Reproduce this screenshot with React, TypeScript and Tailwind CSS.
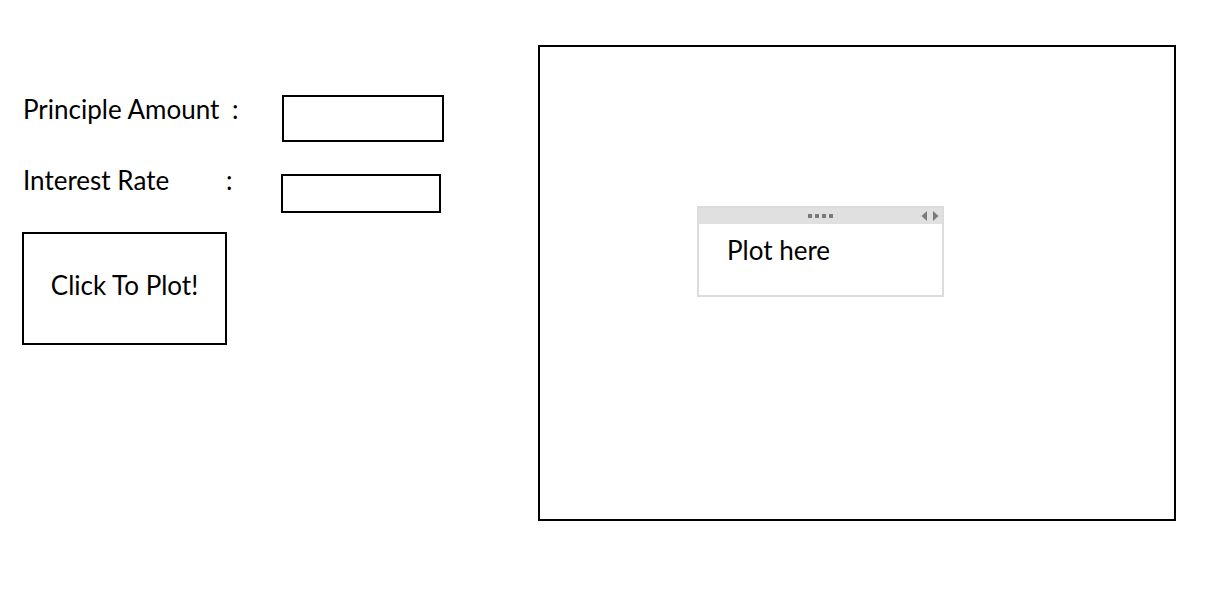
const font = "font-['Lato','Liberation_Sans',sans-serif]";

const PlotWidget = () => {
  return (
    <div className="ml-[157px] mt-[159px] w-[247px] h-[91px] border-2 border-[#dcdcdc] flex flex-col">
      <div className="relative h-[16px] bg-[#e0e0e0] flex items-center justify-center">
        <div className="flex gap-[3px]">
          <span className="w-[4px] h-[4px] bg-[#7a7a7a]" />
          <span className="w-[4px] h-[4px] bg-[#7a7a7a]" />
          <span className="w-[4px] h-[4px] bg-[#7a7a7a]" />
          <span className="w-[4px] h-[4px] bg-[#7a7a7a]" />
        </div>
        <svg className="absolute right-[2px] top-[2px]" width="20" height="12" viewBox="0 0 20 12">
          <polygon points="7,1 7,11 1.5,6" fill="#7a7a7a" />
          <polygon points="13,1 13,11 18.5,6" fill="#7a7a7a" />
        </svg>
      </div>
      <div className="pl-[28px] pt-[11px] text-[26px] leading-[30px] text-black">Plot here</div>
    </div>
  );
};

export default function App() {
  return (
    <div className={`flex w-[1210px] h-[599px] bg-white text-black ${font}`}>
      <div className="w-[538px] shrink-0">
        <div className="flex items-start mt-[95px]">
          <div className="w-[282px] pl-[23px] -mt-[1px] flex text-[26px] leading-[30px]">
            <span className="w-[209px]">Principle Amount</span>
            <span>:</span>
          </div>
          <div className="w-[162px] h-[47px] border-2 border-black" />
        </div>
        <div className="flex items-start mt-[32px]">
          <div className="w-[281px] pl-[23px] -mt-[9px] flex text-[26px] leading-[30px]">
            <span className="w-[203px]">Interest Rate</span>
            <span>:</span>
          </div>
          <div className="w-[160px] h-[39px] border-2 border-black" />
        </div>
        <button className="ml-[22px] mt-[19px] w-[205px] h-[113px] border-2 border-black flex items-center justify-center pb-[8px] text-[26px] leading-[30px] bg-white">
          Click To Plot!
        </button>
      </div>
      <div className="mt-[45px] w-[638px] h-[476px] border-2 border-black">
        <PlotWidget />
      </div>
    </div>
  );
}
